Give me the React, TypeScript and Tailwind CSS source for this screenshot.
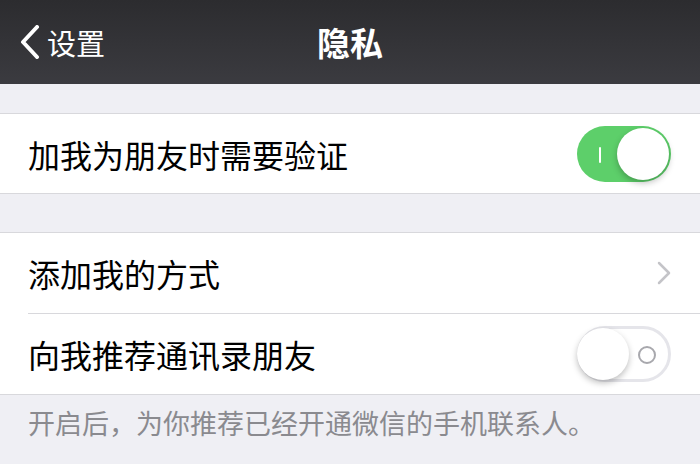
import React, { useState } from 'react';

const font = { fontFamily: '"Noto Sans CJK SC", "Noto Sans", sans-serif' };

const Toggle: React.FC<{ on: boolean; onChange: () => void }> = ({ on, onChange }) => (
  <button
    onClick={onChange}
    className={`relative w-[94px] h-[56px] rounded-full shrink-0 ${
      on ? 'bg-[#5dcf6a]' : 'bg-white border-[3px] border-[#e5e5ea]'
    }`}
  >
    {on ? (
      <span className="absolute left-[22px] top-[21px] w-[2px] h-[16px] bg-white rounded" />
    ) : (
      <span className="absolute right-[12px] top-[17px] w-[18px] h-[18px] rounded-full border-2 border-[#a8a8ad]" />
    )}
    <span
      className={`absolute w-[52px] h-[52px] rounded-full bg-white shadow-[0_3px_6px_rgba(0,0,0,0.25)] ${
        on ? 'right-[2px] top-[2px]' : '-left-[3px] -top-[1px]'
      }`}
    />
  </button>
);

export default function App() {
  const [verify, setVerify] = useState(true);
  const [recommend, setRecommend] = useState(false);

  return (
    <div className="w-[700px] h-[464px] bg-[#efeff4] overflow-hidden" style={font}>
      {/* Nav bar */}
      <div className="relative h-[84px] bg-gradient-to-b from-[#2c2c2f] to-[#3b3b40] flex items-center text-white">
        <div className="flex items-center pl-[20px]">
          <svg width="20" height="34" viewBox="0 0 20 34" className="mr-[7px]">
            <path d="M17 2 L3 17 L17 32" fill="none" stroke="white" strokeWidth="4" strokeLinecap="round" strokeLinejoin="round" />
          </svg>
          <span className="text-[29px] leading-none">设置</span>
        </div>
        <div className="absolute inset-0 flex items-center justify-center">
          <span className="text-[33px] font-bold leading-none">隐私</span>
        </div>
      </div>

      <div className="h-[29px]" />

      {/* Section 1 */}
      <div className="bg-white border-y border-[#d8d8dc] h-[81px] flex items-center justify-between pl-[28px] pr-[29px]">
        <span className="text-[32px] text-black leading-none">加我为朋友时需要验证</span>
        <Toggle on={verify} onChange={() => setVerify(!verify)} />
      </div>

      <div className="h-[38px]" />

      {/* Section 2 */}
      <div className="bg-white border-y border-[#d8d8dc] pl-[28px]">
        <div className="h-[81px] flex items-center justify-between pr-[29px] border-b border-[#d8d8dc]">
          <span className="text-[32px] text-black leading-none">添加我的方式</span>
          <svg width="14" height="24" viewBox="0 0 14 24">
            <path d="M2 2 L12 12 L2 22" fill="none" stroke="#c4c4c8" strokeWidth="2.5" strokeLinecap="round" strokeLinejoin="round" />
          </svg>
        </div>
        <div className="h-[80px] flex items-center justify-between pr-[29px]">
          <span className="text-[32px] text-black leading-none">向我推荐通讯录朋友</span>
          <Toggle on={recommend} onChange={() => setRecommend(!recommend)} />
        </div>
      </div>

      <div className="pl-[28px] pt-[14px] text-[27px] text-[#8a8a8f] leading-none">
        开启后，为你推荐已经开通微信的手机联系人。
      </div>
    </div>
  );
}
